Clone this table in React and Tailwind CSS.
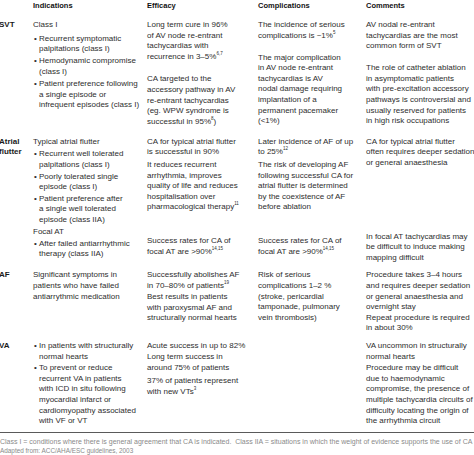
import React from "react";

const L = ({ children }) => <div className="whitespace-nowrap">{children}</div>;
const S = ({ children }) => <sup className="text-[4.5px] top-[-0.9em]">{children}</sup>;

const B = ({ className = "", children }) => (
  <div className={"flex " + className}>
    <span className="w-[6px] shrink-0 pl-[1px]">•</span>
    <div>{children}</div>
  </div>
);

const Row = ({ className = "", label, ind, eff, comp, comm }) => (
  <div className={"grid grid-cols-[34px_114px_111px_108px_150px] items-start " + className}>
    <div className="font-bold text-[8px] text-[#1a1a1a]">{label}</div>
    <div>{ind}</div>
    <div>{eff}</div>
    <div>{comp}</div>
    <div>{comm}</div>
  </div>
);

export default function App() {
  return (
    <div
      className="w-[474px] h-[455px] overflow-hidden bg-white text-[#2e2e2e] text-[8px] leading-[10.6px]"
      style={{ fontFamily: '"Liberation Sans", Arial, sans-serif' }}
    >
      <div className="ml-[-1px] w-[560px]">
        {/* header */}
        <div className="grid grid-cols-[34px_114px_111px_108px_150px] pt-[1px] font-bold text-[7.5px] leading-[10px] text-[#111]">
          <div></div>
          <div>Indications</div>
          <div>Efficacy</div>
          <div>Complications</div>
          <div>Comments</div>
        </div>

        {/* SVT */}
        <Row
          className="mt-[9px]"
          label={<L>SVT</L>}
          ind={
            <>
              <L>Class I</L>
              <B className="mt-[3px]">
                <L>Recurrent symptomatic</L>
                <L>palpitations (class I)</L>
              </B>
              <B className="mt-[1.5px]">
                <L>Hemodynamic compromise</L>
                <L>(class I)</L>
              </B>
              <B className="mt-[1.5px]">
                <L>Patient preference following</L>
                <L>a single episode or</L>
                <L>infrequent episodes (class I)</L>
              </B>
            </>
          }
          eff={
            <>
              <L>Long term cure in 96%</L>
              <L>of AV node re-entrant</L>
              <L>tachycardias with</L>
              <L>
                recurrence in 3–5%<S>6,7</S>
              </L>
              <div className="mt-[12px]">
                <L>CA targeted to the</L>
                <L>accessory pathway in AV</L>
                <L>re-entrant tachycardias</L>
                <L>(eg. WPW syndrome is</L>
                <L>
                  successful in 95%<S>8</S>)
                </L>
              </div>
            </>
          }
          comp={
            <>
              <L>The incidence of serious</L>
              <L>
                complications is ~1%<S>5</S>
              </L>
              <div className="mt-[11.5px]">
                <L>The major complication</L>
                <L>in AV node re-entrant</L>
                <L>tachycardias is AV</L>
                <L>nodal damage requiring</L>
                <L>implantation of a</L>
                <L>permanent pacemaker</L>
                <L>(&lt;1%)</L>
              </div>
            </>
          }
          comm={
            <>
              <L>AV nodal re-entrant</L>
              <L>tachycardias are the most</L>
              <L>common form of SVT</L>
              <div className="mt-[11.5px]">
                <L>The role of catheter ablation</L>
                <L>in asymptomatic patients</L>
                <L>with pre-excitation accessory</L>
                <L>pathways is controversial and</L>
                <L>usually reserved for patients</L>
                <L>in high risk occupations</L>
              </div>
            </>
          }
        />

        {/* Atrial flutter */}
        <Row
          className="mt-[9.5px]"
          label={
            <>
              <L>Atrial</L>
              <L>flutter</L>
            </>
          }
          ind={
            <>
              <L>Typical atrial flutter</L>
              <B className="mt-[1.5px]">
                <L>Recurrent well tolerated</L>
                <L>palpitations (class I)</L>
              </B>
              <B className="mt-[1.5px]">
                <L>Poorly tolerated single</L>
                <L>episode (class I)</L>
              </B>
              <B className="mt-[1px]">
                <L>Patient preference after</L>
                <L>a single well tolerated</L>
                <L>episode (class IIA)</L>
              </B>
              <div className="mt-[1px]">
                <L>Focal AT</L>
              </div>
              <B className="mt-[1.5px]">
                <L>After failed antiarrhythmic</L>
                <L>therapy (class IIA)</L>
              </B>
            </>
          }
          eff={
            <>
              <L>CA for typical atrial flutter</L>
              <L>is successful in 90%</L>
              <div className="mt-[2px]">
                <L>It reduces recurrent</L>
                <L>arrhythmia, improves</L>
                <L>quality of life and reduces</L>
                <L>hospitalisation over</L>
                <L>
                  pharmacological therapy<S>11</S>
                </L>
              </div>
              <div className="mt-[23px]">
                <L>Success rates for CA of</L>
                <L>
                  focal AT are &gt;90%<S>14,15</S>
                </L>
              </div>
            </>
          }
          comp={
            <>
              <L>Later incidence of AF of up</L>
              <L>
                to 25%<S>12</S>
              </L>
              <div className="mt-[2px]">
                <L>The risk of developing AF</L>
                <L>following successful CA for</L>
                <L>atrial flutter is determined</L>
                <L>by the coexistence of AF</L>
                <L>before ablation</L>
              </div>
              <div className="mt-[23px]">
                <L>Success rates for CA of</L>
                <L>
                  focal AT are &gt;90%<S>14,15</S>
                </L>
              </div>
            </>
          }
          comm={
            <>
              <L>CA for typical atrial flutter</L>
              <L>often requires deeper sedation</L>
              <L>or general anaesthesia</L>
              <div className="mt-[63px]">
                <L>In focal AT tachycardias may</L>
                <L>be difficult to induce making</L>
                <L>mapping difficult</L>
              </div>
            </>
          }
        />

        {/* AF */}
        <Row
          className="mt-[7px]"
          label={<L>AF</L>}
          ind={
            <>
              <L>Significant symptoms in</L>
              <L>patients who have failed</L>
              <L>antiarrythmic medication</L>
            </>
          }
          eff={
            <>
              <L>Successfully abolishes AF</L>
              <L>
                in 70–80% of patients<S>19</S>
              </L>
              <div className="mt-[0.5px]">
                <L>Best results in patients</L>
                <L>with paroxysmal AF and</L>
                <L>structurally normal hearts</L>
              </div>
            </>
          }
          comp={
            <>
              <L>Risk of serious</L>
              <L>complications 1–2 %</L>
              <L>(stroke, pericardial</L>
              <L>tamponade, pulmonary</L>
              <L>vein thrombosis)</L>
            </>
          }
          comm={
            <>
              <L>Procedure takes 3–4 hours</L>
              <L>and requires deeper sedation</L>
              <L>or general anaesthesia and</L>
              <L>overnight stay</L>
              <L>Repeat procedure is required</L>
              <L>in about 30%</L>
            </>
          }
        />

        {/* VA */}
        <Row
          className="mt-[7px]"
          label={<L>VA</L>}
          ind={
            <>
              <B>
                <L>In patients with structurally</L>
                <L>normal hearts</L>
              </B>
              <B className="mt-[1px]">
                <L>To prevent or reduce</L>
                <L>recurrent VA in patients</L>
                <L>with ICD in situ following</L>
                <L>myocardial infarct or</L>
                <L>cardiomyopathy associated</L>
                <L>with VF or VT</L>
              </B>
            </>
          }
          eff={
            <>
              <L>Acute success in up to 82%</L>
              <div className="mt-[0.5px]">
                <L>Long term success in</L>
                <L>around 75% of patients</L>
              </div>
              <div className="mt-[3px]">
                <L>37% of patients represent</L>
                <L>
                  with new VTs<S>3</S>
                </L>
              </div>
            </>
          }
          comp={null}
          comm={
            <>
              <L>VA uncommon in structurally</L>
              <L>normal hearts</L>
              <div className="mt-[1px]">
                <L>Procedure may be difficult</L>
                <L>due to haemodynamic</L>
                <L>compromise, the presence of</L>
                <L>multiple tachycardia circuits of</L>
                <L>difficulty locating the origin of</L>
                <L>the arrhythmia circuit</L>
              </div>
            </>
          }
        />
      </div>

      {/* rule */}
      <div className="mt-[5px] h-[1.5px] bg-[#5a5a5a]"></div>

      {/* footnotes */}
      <div className="mt-[4px] leading-[9px] text-[#8a8a8a]">
        <div className="whitespace-nowrap text-[7px]">
          Class I = conditions where there is general agreement that CA is indicated.&nbsp; Class IIA = situations in which the weight of evidence supports the use of CA
        </div>
        <div className="whitespace-nowrap text-[6.4px]">Adapted from: ACC/AHA/ESC guidelines, 2003</div>
      </div>
    </div>
  );
}
